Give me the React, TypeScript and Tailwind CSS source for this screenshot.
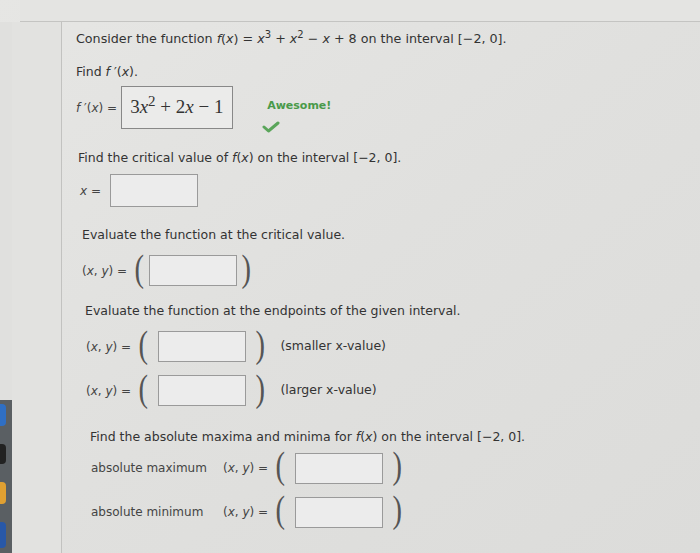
import React from "react";

const font = { fontFamily: '"DejaVu Sans", Verdana, sans-serif' };

function Box({ w = "w-[88px]", h = "h-[30px]" }: { w?: string; h?: string }) {
  return <div className={`${w} ${h} border border-[#9a9a9a] bg-[#ececec]`} />;
}

function Paren({ side }: { side: "l" | "r" }) {
  return (
    <span
      className="text-[38px] leading-none font-thin text-[#555] scale-x-75 inline-block -mt-[6px]"
      style={{ fontFamily: '"Liberation Serif", serif' }}
    >
      {side === "l" ? "(" : ")"}
    </span>
  );
}

function XY() {
  return (
    <span className="text-[12px] text-[#444]">
      (<i>x</i>, <i>y</i>) =
    </span>
  );
}

function PointRow({ label, note, gap = "gap-[8px]" }: { label?: string; note?: string; gap?: string }) {
  return (
    <div className="flex items-center">
      {label && <span className="w-[132px] text-[12px] text-[#444]">{label}</span>}
      <XY />
      <div className={`flex items-center ${gap} ml-[6px]`}>
        <Paren side="l" />
        <Box h="h-[31px]" />
        <Paren side="r" />
      </div>
      {note && <span className="ml-[14px] text-[12.5px] text-[#333]">{note}</span>}
    </div>
  );
}

export default function App() {
  return (
    <div
      className="w-[700px] h-[553px] overflow-hidden flex flex-col bg-gradient-to-br from-[#e6e6e4] via-[#e0e0de] to-[#dcdcda] text-[#333]"
      style={font}
    >
      <div className="h-[22px] shrink-0 ml-[20px] border-b border-[#c4c4c2] bg-[#e4e4e2]" />
      <div className="flex flex-1 min-h-0">
        <div className="w-[12px] flex flex-col justify-end bg-[#e0e0de]">
          <div className="h-[153px] bg-[#5a5f63] flex flex-col items-center gap-[18px] pt-[4px]">
            <div className="w-[6px] h-[22px] rounded-r-[4px] bg-[#2f6fc4] self-start" />
            <div className="w-[6px] h-[20px] rounded-r-[4px] bg-[#222] self-start" />
            <div className="w-[6px] h-[22px] rounded-r-[4px] bg-[#e0a032] self-start" />
            <div className="w-[6px] h-[26px] rounded-r-[4px] bg-[#2858a8] self-start" />
          </div>
        </div>
        <div className="w-[50px] border-r border-[#c2c2c0] bg-[#e2e2e0]" />
        <div className="flex-1 flex flex-col pl-[14px] pt-[7px]">
          <p className="text-[12.7px] h-[18px]">
            Consider the function <i>f</i>(<i>x</i>) = <i>x</i>
            <sup className="text-[10px]">3</sup> + <i>x</i>
            <sup className="text-[10px]">2</sup> − <i>x</i> + 8 on the interval [−2, 0].
          </p>
          <p className="text-[12.5px] mt-[16px]">
            Find <i>f</i> ′(<i>x</i>).
          </p>
          <div className="flex items-start mt-[4px]">
            <span className="text-[12px] text-[#444] mt-[13px]">
              <i>f</i> ′(<i>x</i>) =
            </span>
            <div className="ml-[4px] flex items-center w-[112px] h-[43px] border border-[#888] bg-[#ebebea] pl-[8px]">
              <span className="text-[19px] text-[#333]" style={{ fontFamily: '"Liberation Serif", serif' }}>
                3<i>x</i>
                <sup className="text-[15px]">2</sup> + 2<i>x</i> − 1
              </span>
            </div>
            <div className="ml-[34px] flex flex-col items-start">
              <span className="text-[11px] font-bold text-[#4a9a4a] mt-[12px]">Awesome!</span>
              <svg width="18" height="12" viewBox="0 0 18 12" className="mt-[7px] -ml-[5px]">
                <path d="M2 6 L6.5 10 L16 2" fill="none" stroke="#5aa55a" strokeWidth="3" strokeLinecap="round" strokeLinejoin="round" />
              </svg>
            </div>
          </div>

          <p className="text-[12.5px] mt-[16px] ml-[2px]">
            Find the critical value of <i>f</i>(<i>x</i>) on the interval [−2, 0].
          </p>
          <div className="flex items-center mt-[6px] ml-[4px]">
            <span className="text-[12px] text-[#444]">
              <i>x</i> =
            </span>
            <div className="ml-[9px]">
              <Box w="w-[88px]" h="h-[33px]" />
            </div>
          </div>

          <p className="text-[12.5px] mt-[19px] ml-[6px]">Evaluate the function at the critical value.</p>
          <div className="ml-[6px] mt-[10px]">
            <PointRow gap="gap-[3px]" />
          </div>

          <p className="text-[12.5px] mt-[15px] ml-[9px]">Evaluate the function at the endpoints of the given interval.</p>
          <div className="ml-[10px] mt-[10px] flex flex-col gap-[12px]">
            <PointRow note="(smaller x-value)" />
            <PointRow note="(larger x-value)" />
          </div>

          <p className="text-[12.5px] mt-[21px] ml-[14px]">
            Find the absolute maxima and minima for <i>f</i>(<i>x</i>) on the interval [−2, 0].
          </p>
          <div className="ml-[15px] mt-[6px] flex flex-col gap-[12px]">
            <PointRow label="absolute maximum" />
            <PointRow label="absolute minimum" />
          </div>
        </div>
      </div>
    </div>
  );
}
